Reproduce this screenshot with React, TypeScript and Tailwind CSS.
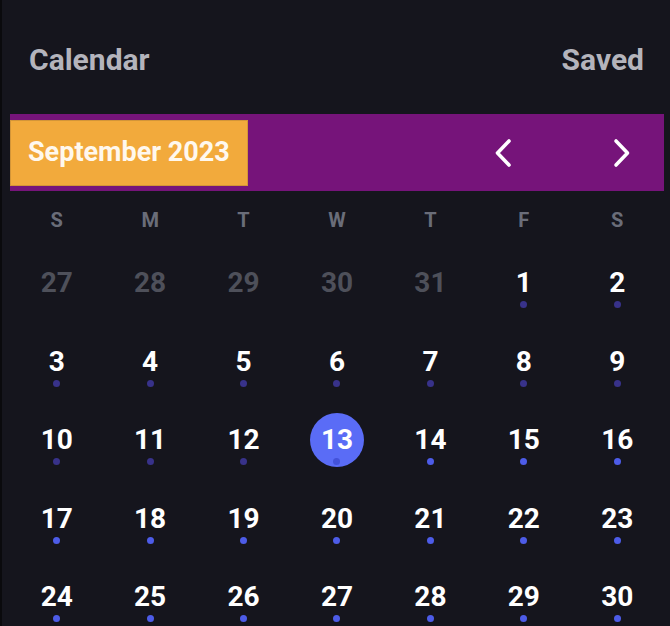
// Month calendar view: title row, month bar with prev/next, 7-column day grid.
const WEEKDAYS = ["S", "M", "T", "W", "T", "F", "S"];

const TODAY = 13;

type Day = { n: number; outside: boolean };

function buildDays(): Day[] {
  const days: Day[] = [];
  for (let n = 27; n <= 31; n++) days.push({ n, outside: true });
  for (let n = 1; n <= 30; n++) days.push({ n, outside: false });
  return days;
}

function Chevron({ dir }: { dir: "left" | "right" }) {
  const points = dir === "left" ? "15,3 3.5,15 15,27" : "3,3 14.5,15 3,27";
  return (
    <svg width="18" height="30" viewBox="0 0 18 30" fill="none">
      <polyline points={points} stroke="white" strokeWidth="3.6" strokeLinecap="round" strokeLinejoin="round" />
    </svg>
  );
}

function DayCell({ day }: { day: Day }) {
  const isToday = !day.outside && day.n === TODAY;
  const dot = day.outside ? null : day.n < TODAY ? "bg-[#38328a]" : isToday ? "bg-[#4352d9]" : "bg-[#4d5ce8]";
  return (
    <div className="flex h-[78.5px] flex-col items-center">
      <div
        className={`mt-[7px] flex h-[54px] w-[54px] items-center justify-center rounded-full text-[28px] font-bold leading-none ${
          isToday ? "bg-[#5a6cf6]" : ""
        } ${day.outside ? "text-[#4e505a]" : "text-white"}`}
      >
        {day.n}
      </div>
      {dot && <div className={`-mt-[9px] h-[7px] w-[7px] rounded-full ${dot}`} />}
    </div>
  );
}

export default function App() {
  const days = buildDays();
  return (
    <div
      className="flex h-[626px] w-[670px] overflow-hidden bg-[#15151d]"
      style={{ fontFamily: "Roboto, 'Liberation Sans', sans-serif" }}
    >
      <div className="w-[2px] shrink-0 bg-[#0a0a0d]" />
      <div className="flex flex-1 flex-col">
        <header className="flex h-[114px] shrink-0 items-start justify-between pl-[27px] pr-[26px] pt-[45px] text-[30px] font-bold leading-none text-[#b4b4bc]">
          <span>Calendar</span>
          <span>Saved</span>
        </header>

        <div className="ml-[8px] flex h-[77px] w-[654px] shrink-0 items-center bg-[#76147a]">
          <div className="flex h-[66px] w-[238px] items-center border border-[#d39538] bg-[#f2aa3c] pl-[17px] text-[27px] font-bold leading-none text-[#fff8ee]">
            September 2023
          </div>
          <div className="ml-auto flex items-center gap-[101px] pr-[33px]">
            <Chevron dir="left" />
            <Chevron dir="right" />
          </div>
        </div>

        <div className="ml-[8px] grid w-[654px] shrink-0 grid-cols-7">
          {WEEKDAYS.map((d, i) => (
            <div key={i} className="flex h-[58px] items-center justify-center text-[20px] font-bold leading-none text-[#6a6d79]">
              {d}
            </div>
          ))}
          {days.map((d, i) => (
            <DayCell key={i} day={d} />
          ))}
        </div>
      </div>
    </div>
  );
}
